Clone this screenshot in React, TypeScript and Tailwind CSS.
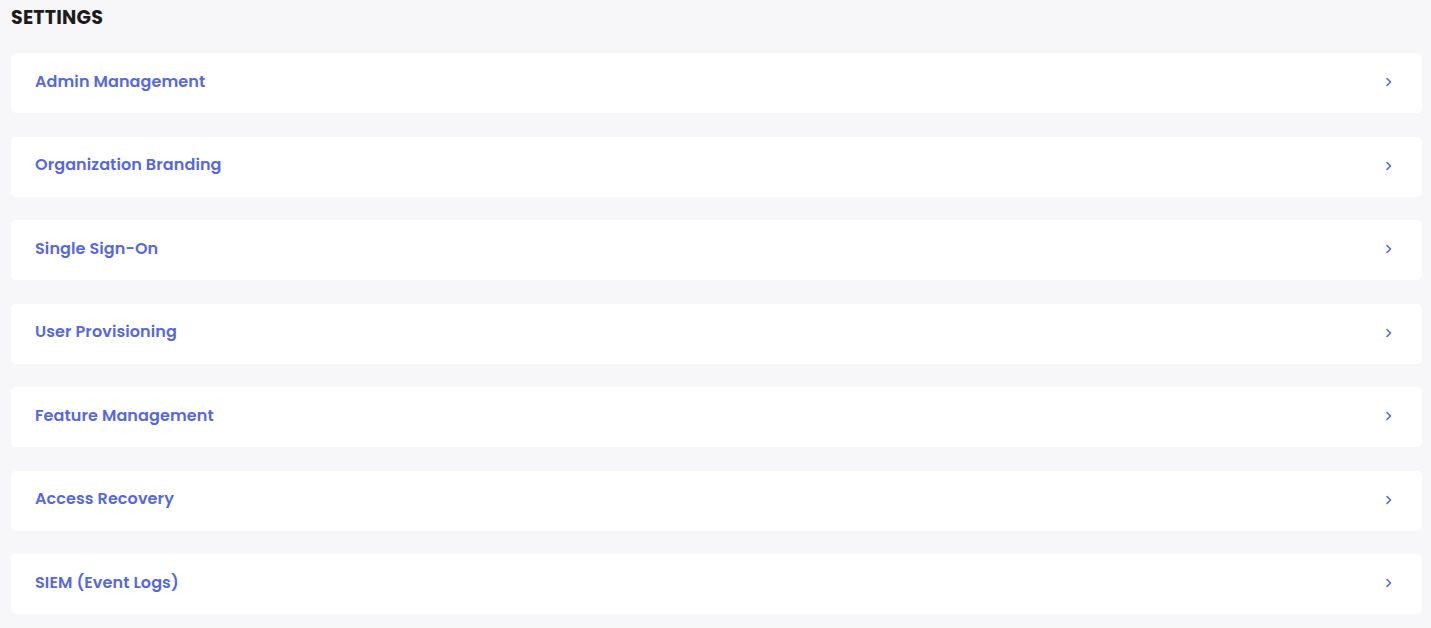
import React from 'react';

const items = [
    'Admin Management',
    'Organization Branding',
    'Single Sign-On',
    'User Provisioning',
    'Feature Management',
    'Access Recovery',
    'SIEM (Event Logs)',
];

function Chevron() {
    return (
        <svg width="8" height="10" viewBox="0 0 8 10" fill="none" className="-mt-[2px] text-[#5668e0]">
            <path d="M2 1.5L5.5 5L2 8.5" stroke="currentColor" strokeWidth="1.6" strokeLinecap="round" strokeLinejoin="round" />
        </svg>
    );
}

export default function App() {
    return (
        <div className="min-h-[628px] bg-[#f7f7f9] pl-[11px] pr-[9px] pt-[6px] font-['Poppins','Inter',sans-serif]">
            <h1 className="text-[19px] font-bold tracking-[0.2px] text-[#1c1c1e] leading-[24px]">SETTINGS</h1>
            <div className="mt-[23px] flex flex-col gap-[23.5px]">
                {items.map((item) => (
                    <div key={item} className="flex h-[60px] items-center justify-between rounded-[5px] bg-white pl-[24px] pr-[29px]">
                        <span className="text-[16px] font-semibold tracking-[0.1px] text-[#5668e0] -mt-[3px]">{item}</span>
                        <Chevron />
                    </div>
                ))}
            </div>
        </div>
    );
}
